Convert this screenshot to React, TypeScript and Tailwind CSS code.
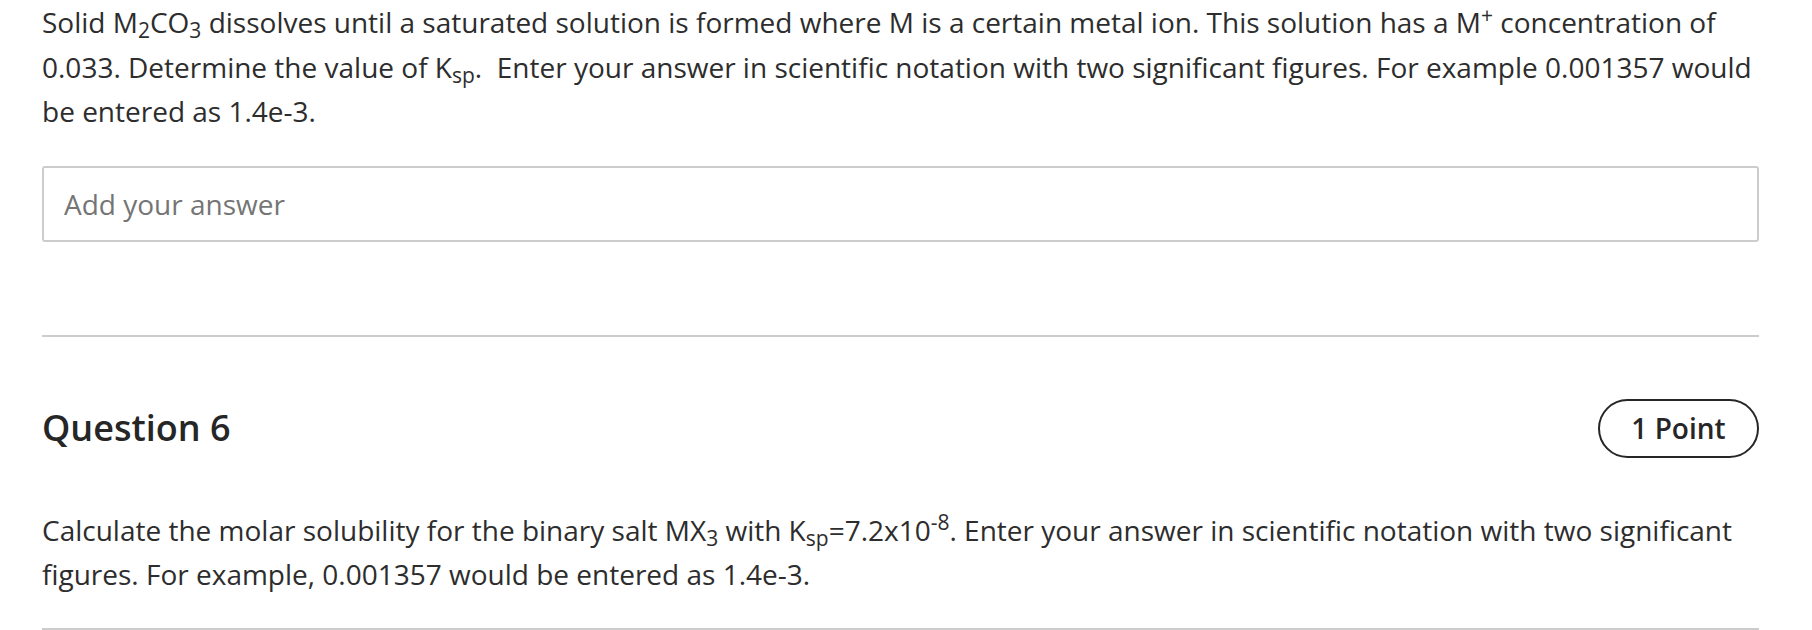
export default function App() {
  return (
    <div className="min-h-screen bg-white font-['Open_Sans',sans-serif] text-[#2d2d2d]">
      <div className="pl-[42px] pr-[53px]">
        <p className="text-[28px] leading-[44.5px]">
          Solid M<sub className="text-[21px] leading-none">2</sub>CO<sub className="text-[21px] leading-none">3</sub> dissolves until a saturated solution is formed where M is a certain metal ion. This solution has a M<sup className="text-[21px] leading-none">+</sup> concentration of 0.033. Determine the value of K<sub className="text-[21px] leading-none">sp</sub>.&nbsp; Enter your answer in scientific notation with two significant figures. For example 0.001357 would be entered as 1.4e-3.
        </p>

        <div className="mt-[32px] flex h-[76px] items-center rounded-[3px] border-2 border-[#cccccc] px-[20px]">
          <input
            type="text"
            placeholder="Add your answer"
            className="w-full bg-transparent text-[28px] outline-none placeholder:text-[#757575]"
          />
        </div>

        <hr className="mt-[93px] border-t-2 border-[#cccccc]" />

        <div className="mt-[62px] flex items-center justify-between">
          <h2 className="text-[36px] font-semibold text-[#262626]">Question 6</h2>
          <span className="flex h-[59px] w-[161px] items-center justify-center rounded-full border-2 border-[#262626] text-[28px] font-semibold text-[#262626]">
            1 Point
          </span>
        </div>

        <p className="mt-[50px] text-[28px] leading-[44.5px]">
          Calculate the molar solubility for the binary salt MX<sub className="text-[21px] leading-none">3</sub> with K<sub className="text-[21px] leading-none">sp</sub>=7.2x10<sup className="text-[21px] leading-none">-8</sup>. Enter your answer in scientific notation with two significant figures. For example, 0.001357 would be entered as 1.4e-3.
        </p>

        <hr className="mt-[31px] border-t-2 border-[#cccccc]" />
      </div>
    </div>
  );
}
